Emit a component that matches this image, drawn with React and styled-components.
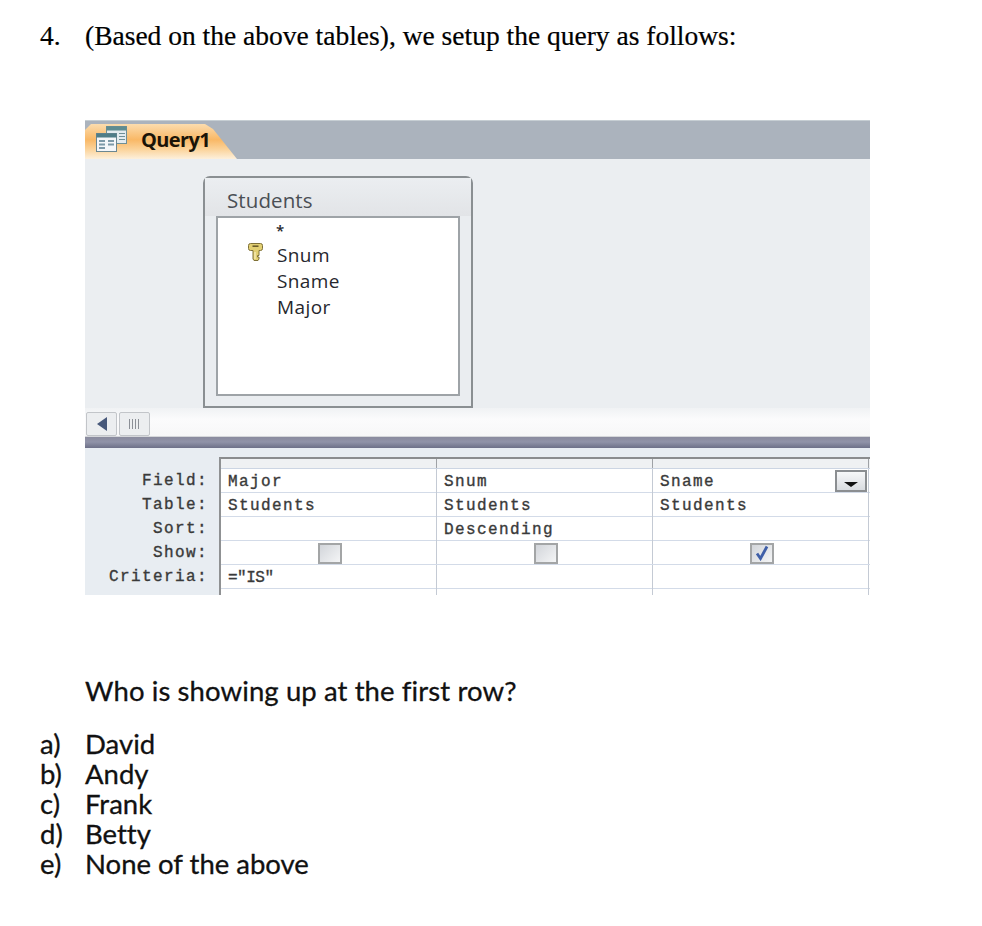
import React from 'react';
import styled, { createGlobalStyle } from 'styled-components';

const GlobalStyle = createGlobalStyle`
  html, body { margin: 0; padding: 0; background: #fff; }
`;

const rows = [
  { label: 'Field:', cells: ['Major', 'Snum', 'Sname'] },
  { label: 'Table:', cells: ['Students', 'Students', 'Students'] },
  { label: 'Sort:', cells: ['', 'Descending', ''] },
  { label: 'Show:', checks: [false, false, true] },
  { label: 'Criteria:', cells: ['=″IS″', '', ''], tight: true },
];

const answers = [
  ['a)', 'David'],
  ['b)', 'Andy'],
  ['c)', 'Frank'],
  ['d)', 'Betty'],
  ['e)', 'None of the above'],
];

const QueryIcon = () => (
  <svg width="32" height="26" viewBox="0 0 32 26">
    <rect x="10.5" y="0.5" width="20" height="17" fill="#e3ebef" stroke="#6f8f96" />
    <rect x="10.5" y="0.5" width="20" height="4" fill="#5f8c90" />
    <path d="M23 7.5h6M23 10.5h6M23 13.5h6" stroke="#6f8f96" />
    <rect x="0.5" y="7.5" width="20" height="18" fill="#f4f6f9" stroke="#6b8791" />
    <rect x="0.5" y="7.5" width="20" height="4" fill="#4f7d88" />
    <path d="M3 15h6M3 18.5h6M3 22h6M12 15h6M12 18.5h6" stroke="#7d99a8" strokeWidth="2" />
  </svg>
);

const KeyIcon = () => (
  <svg width="15" height="19" viewBox="0 0 15 19">
    <path
      d="M2.500 .5h10a2 2 0 0 1 2 2v3a2 2 0 0 1-2 2H11v5H9.500v1.500H11v2l-1 1.500H6l-1-1.500V7.500H2.500a2 2 0 0 1-2-2v-3a2 2 0 0 1 2-2z"
      fill="#e2cf72"
      stroke="#7f7036"
    />
    <path d="M4.500 3.200h6" stroke="#6b5d2a" strokeWidth="1.600" />
    <path d="M7 9v7" stroke="#f4e9b0" strokeWidth="1.500" />
  </svg>
);

const App = () => (
  <Page>
    <GlobalStyle />
    <Question>
      <Number>4.</Number>
      <span>(Based on the above tables), we setup the query as follows:</span>
    </Question>

    <Designer>
      <TabBar>
        <Tab>
          <QueryIcon />
          <TabLabel>Query1</TabLabel>
        </Tab>
      </TabBar>

      <Canvas>
        <TableWindow>
          <WindowTitle>Students</WindowTitle>
          <FieldBox>
            <FieldRow $star>*</FieldRow>
            <FieldRow>
              <KeySlot><KeyIcon /></KeySlot>
              Snum
            </FieldRow>
            <FieldRow>Sname</FieldRow>
            <FieldRow>Major</FieldRow>
          </FieldBox>
        </TableWindow>
      </Canvas>

      <ScrollStrip>
        <ScrollButton>
          <svg width="12" height="14" viewBox="0 0 12 14">
            <path d="M11 0v14L1 7z" fill="#47587a" />
          </svg>
        </ScrollButton>
        <ScrollThumb>
          <svg width="14" height="10" viewBox="0 0 14 10">
            <path d="M1.5 0v10M4.5 0v10M7.5 0v10M10.5 0v10" stroke="#8b8f96" />
          </svg>
        </ScrollThumb>
      </ScrollStrip>

      <Splitter />

      <GridArea>
        <Labels>
          <LabelSpacer />
          {rows.map((row) => (
            <RowLabel key={row.label}>{row.label}</RowLabel>
          ))}
        </Labels>
        <Grid>
          <HeaderRow>
            {[0, 1, 2].map((i) => <HeaderCell key={i} />)}
          </HeaderRow>
          {rows.map((row, rowIndex) => (
            <GridRow key={row.label}>
              {[0, 1, 2].map((i) => (
                <Cell key={i} $center={Boolean(row.checks)} $tight={row.tight}>
                  {row.checks ? (
                    <CheckBox>
                      {row.checks[i] && (
                        <svg width="18" height="16" viewBox="0 0 18 16">
                          <path d="M4 8.500l3.500 5L14 1.500" fill="none" stroke="#3f5fa8" strokeWidth="2.800" />
                        </svg>
                      )}
                    </CheckBox>
                  ) : (
                    row.cells[i]
                  )}
                  {rowIndex === 0 && i === 2 && (
                    <DropButton>
                      <svg width="14" height="5" viewBox="0 0 14 5">
                        <path d="M0 0h14L7 5z" fill="#111" />
                      </svg>
                    </DropButton>
                  )}
                </Cell>
              ))}
            </GridRow>
          ))}
          <TailRow>
            {[0, 1, 2].map((i) => <TailCell key={i} />)}
          </TailRow>
        </Grid>
      </GridArea>
    </Designer>

    <Prompt>Who is showing up at the first row?</Prompt>
    <Answers>
      {answers.map(([letter, text]) => (
        <Answer key={letter}>
          <AnswerLetter>{letter}</AnswerLetter>
          <span>{text}</span>
        </Answer>
      ))}
    </Answers>
  </Page>
);

export default App;

const Page = styled.div`
  width: 982px;
  height: 926px;
  overflow: hidden;
  padding-top: 18px;
  box-sizing: border-box;
  background: #fff;
  color: #000;
`;

const Question = styled.div`
  display: flex;
  height: 36px;
  padding-left: 40px;
  font: 27.5px/36px "Liberation Serif", serif;
  -webkit-text-stroke: 0.2px #000;
`;

const Number = styled.span`
  width: 45px;
`;

const Designer = styled.div`
  width: 785px;
  margin: 66px 0 0 85px;
  background: #e9edf1;
`;

const TabBar = styled.div`
  display: flex;
  align-items: flex-end;
  height: 39px;
  box-sizing: border-box;
  padding-top: 3px;
  background: #abb3bd;
  border-top: 1px solid #c6ced3;
`;

const Tab = styled.div`
  display: flex;
  align-items: flex-start;
  gap: 13px;
  width: 152px;
  height: 35px;
  box-sizing: border-box;
  padding: 2px 0 0 11px;
  background: linear-gradient(#fbdcae 0%, #f9b866 45%, #fbd39a 72%, #fdf0dc 100%);
  clip-path: polygon(0 6px, 6px 0, 120px 0, 128px 5px, 152px 35px, 0 35px);
`;

const TabLabel = styled.span`
  font: bold 20px/27px "Open Sans", sans-serif;
  letter-spacing: -0.6px;
  color: #1b1408;
`;

const Canvas = styled.div`
  height: 249px;
  box-sizing: border-box;
  padding: 17px 0 0 118px;
  background: #ebeef1;
`;

const TableWindow = styled.div`
  display: flex;
  flex-direction: column;
  width: 270px;
  height: 232px;
  box-sizing: border-box;
  border: 2px solid #8a8f92;
  border-radius: 7px 7px 0 0;
  background: #eaedf0;
`;

const WindowTitle = styled.div`
  height: 38px;
  padding: 10px 0 0 22px;
  box-sizing: border-box;
  font: 20.5px/24px "Open Sans", sans-serif;
  letter-spacing: 0.1px;
  color: #4a4f55;
  background: linear-gradient(#ebeef1, #e2e4e7);
`;

const FieldBox = styled.div`
  width: 244px;
  height: 180px;
  margin-left: 11px;
  box-sizing: border-box;
  border: 2px solid #9ea3a7;
  background: #fff;
`;

const FieldRow = styled.div`
  display: flex;
  align-items: center;
  height: 26px;
  padding-left: 59px;
  position: relative;
  font: 19px/26px "Open Sans", sans-serif;
  letter-spacing: 0.4px;
  color: #26272d;
  ${({ $star }) => $star && 'height: 24px; font-size: 15px; font-weight: 600; padding-left: 58px;'}
`;

const KeySlot = styled.span`
  position: absolute;
  left: 30px;
  top: 1px;
  line-height: 0;
`;

const ScrollStrip = styled.div`
  display: flex;
  align-items: center;
  gap: 2px;
  height: 29px;
  box-sizing: border-box;
  padding-top: 3px;
  background: linear-gradient(#f0f2f4, #fbfbfc 40%, #f7f7f8);
  border-bottom: 1px solid #d5d7da;
`;

const ScrollButton = styled.div`
  display: flex;
  align-items: center;
  justify-content: center;
  width: 29px;
  height: 22px;
  margin-left: 1px;
  border: 1px solid #c2c5c9;
  border-radius: 2px;
  background: #eceef0;
`;

const ScrollThumb = styled(ScrollButton)`
  margin-left: 0;
`;

const Splitter = styled.div`
  height: 11px;
  background: linear-gradient(#8a8b9e, #9093a8 45%, #6d7088);
`;

const GridArea = styled.div`
  display: flex;
  padding-top: 9px;
  background: #e8edf2;
`;

const Labels = styled.div`
  width: 134px;
  padding-right: 11px;
  box-sizing: border-box;
  flex: none;
`;

const LabelSpacer = styled.div`
  height: 12px;
`;

const monoText = `
  font: 16px/24px "Liberation Mono", "DejaVu Sans Mono", monospace;
  letter-spacing: 1.4px;
  color: #3a3a3a;
  -webkit-text-stroke: 0.35px #3a3a3a;
`;

const RowLabel = styled.div`
  height: 24px;
  text-align: right;
  white-space: pre;
  ${monoText}
`;

const Grid = styled.div`
  width: 651px;
  box-sizing: border-box;
  border-top: 2px solid #8a8c8e;
  border-left: 2px solid #8f9193;
  background: #fff;
`;

const GridRow = styled.div`
  display: grid;
  grid-template-columns: 216px 216px 216px;
  height: 24px;
  box-sizing: border-box;
  border-bottom: 1px solid #d3dbe8;
`;

const HeaderRow = styled(GridRow)`
  height: 10px;
  background: #eff1f3;
  border-bottom: 1px solid #ccd5e3;
`;

const TailRow = styled(GridRow)`
  height: 6px;
  border-bottom: 0;
`;

const Cell = styled.div`
  position: relative;
  display: flex;
  align-items: center;
  justify-content: ${({ $center }) => ($center ? 'center' : 'flex-start')};
  padding: 1px 0 0 ${({ $center }) => ($center ? '3px' : '7px')};
  box-sizing: border-box;
  border-right: 1px solid #c4cad4;
  white-space: pre;
  ${monoText}
  ${({ $tight }) => $tight && 'letter-spacing: -0.5px;'}
`;

const HeaderCell = styled.div`
  border-right: 1px solid #9fa2a6;
`;

const TailCell = styled.div`
  border-right: 1px solid #c4cad4;
`;

const CheckBox = styled.span`
  display: flex;
  align-items: center;
  justify-content: center;
  width: 24px;
  height: 21px;
  box-sizing: border-box;
  border: 2px solid #a3a5a6;
  background: linear-gradient(135deg, #d2d5da, #f4f5f6);
`;

const DropButton = styled.span`
  position: absolute;
  right: 1px;
  top: 1px;
  display: flex;
  align-items: flex-end;
  justify-content: center;
  width: 32px;
  height: 22px;
  padding-bottom: 3px;
  box-sizing: border-box;
  border: 2px solid #8b8e91;
  background: linear-gradient(#f7f8f9, #d9dce0);
`;

const Prompt = styled.div`
  margin: 78px 0 0 85px;
  height: 36px;
  font: 27.5px/36px Lato, sans-serif;
  font-variant-ligatures: none;
  letter-spacing: 0.1px;
  color: #111;
  -webkit-text-stroke: 0.3px #111;
`;

const Answers = styled.div`
  margin: 20px 0 0 40px;
`;

const Answer = styled.div`
  display: flex;
  height: 30px;
  font: 27.5px/30px Lato, sans-serif;
  font-variant-ligatures: none;
  color: #111;
  -webkit-text-stroke: 0.3px #111;
`;

const AnswerLetter = styled.span`
  width: 45px;
`;
